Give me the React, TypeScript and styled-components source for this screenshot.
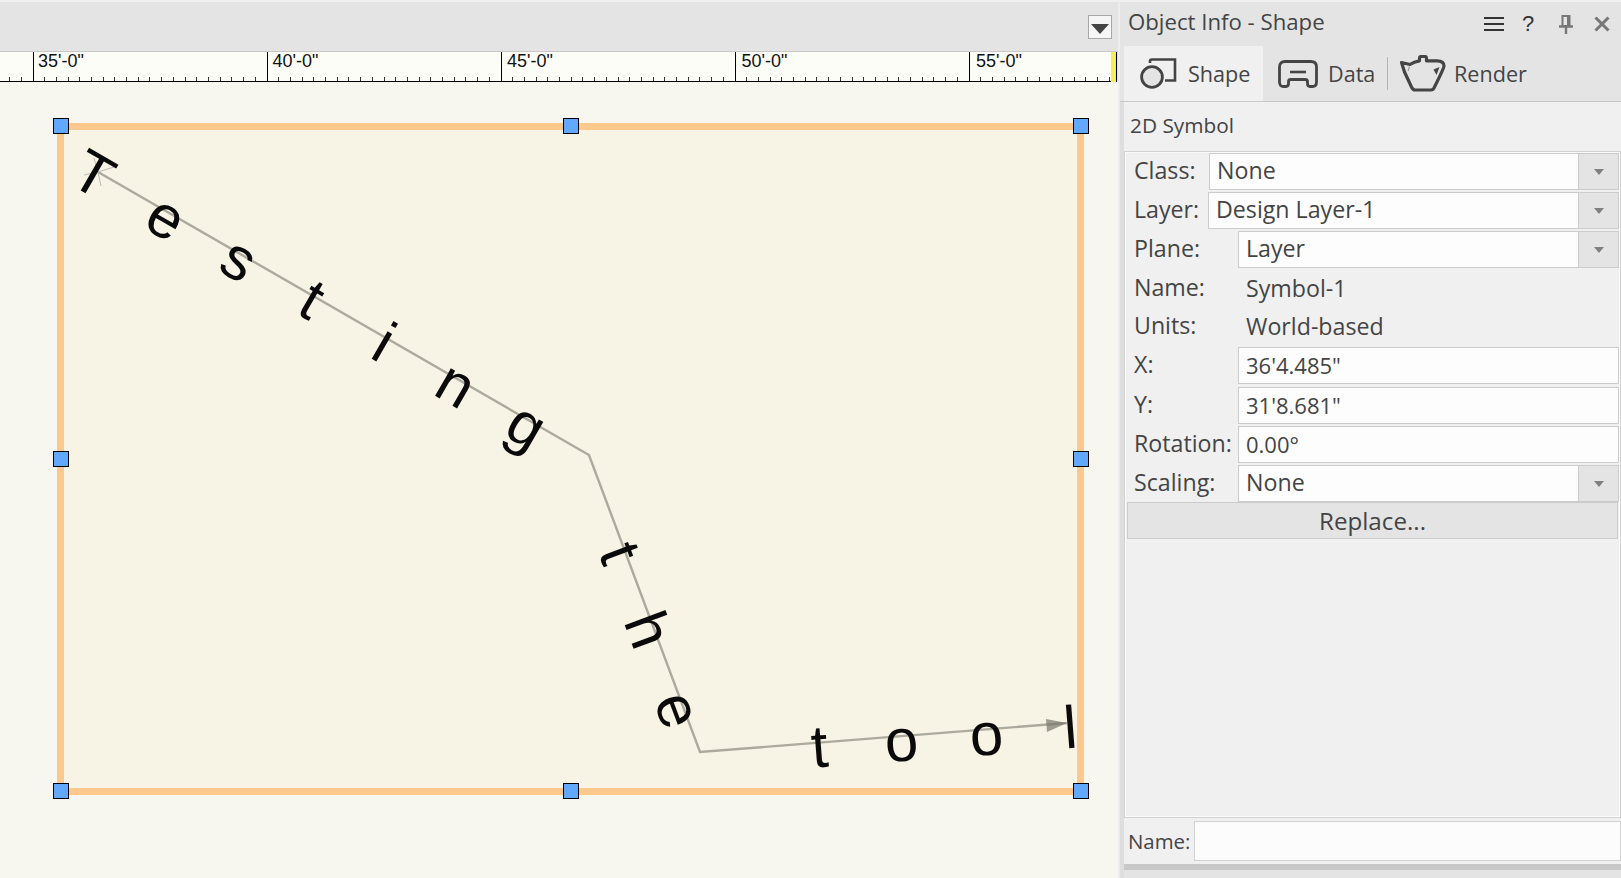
import React, { FC } from 'react'
import styled, { createGlobalStyle } from 'styled-components'

const GlobalStyle = createGlobalStyle`
	html, body {
		margin: 0;
		padding: 0;
		background: #f0f0f0;
		overflow: hidden;
	}
	* {
		box-sizing: border-box;
	}
`

const UI_FONT = `'Open Sans', 'Noto Sans', sans-serif`

// ruler: 234px between majors, 20 minor ticks per major
const MAJOR_STEP = 234
const MINOR_STEP = MAJOR_STEP / 20
const RULER_START = 32.5
const rulerLabels = [`35'-0"`, `40'-0"`, `45'-0"`, `50'-0"`, `55'-0"`]
const minorTicks = Array.from({ length: 95 }, (_, i) => RULER_START - 2 * MINOR_STEP + i * MINOR_STEP)

// letters sit along the path, x/y is the middle of the baseline in page coordinates
const letters = [
	{ ch: 'T', x: 83, y: 192, r: 30 },
	{ ch: 'e', x: 156, y: 235, r: 30 },
	{ ch: 's', x: 229, y: 277, r: 30 },
	{ ch: 't', x: 302, y: 317, r: 30 },
	{ ch: 'i', x: 374, y: 360, r: 30 },
	{ ch: 'n', x: 446, y: 402, r: 30 },
	{ ch: 'g', x: 516.5, y: 443, r: 30 },
	{ ch: 't', x: 601, y: 560, r: 69.5 },
	{ ch: 'h', x: 629, y: 637, r: 69.5 },
	{ ch: 'e', x: 659, y: 717, r: 69.5 },
	{ ch: 't', x: 821, y: 767, r: -4.5 },
	{ ch: 'o', x: 903, y: 761, r: -4.5 },
	{ ch: 'o', x: 988, y: 755, r: -4.5 },
	{ ch: 'l', x: 1072, y: 748, r: -4.5 },
]

const handles: [number, number][] = [
	[0, 0],
	[50, 0],
	[100, 0],
	[0, 50],
	[100, 50],
	[0, 100],
	[50, 100],
	[100, 100],
]

const HamburgerIcon = () => (
	<svg width='20' height='16' viewBox='0 0 20 16'>
		<path d='M0 2H20M0 8H20M0 14H20' stroke='#333' strokeWidth='2' />
	</svg>
)

const PinIcon = () => (
	<svg width='16' height='19' viewBox='0 0 16 19'>
		<path d='M4.5 1H11.5V11H4.5Z' fill='none' stroke='#777' strokeWidth='2' />
		<path d='M9 1.5H11.5V11H9Z' fill='#777' />
		<path d='M1 11.5H15M8 11.5V19' stroke='#777' strokeWidth='2.4' />
	</svg>
)

const CloseIcon = () => (
	<svg width='16' height='16' viewBox='0 0 16 16'>
		<path d='M1.5 1.5L14.5 14.5M14.5 1.5L1.5 14.5' stroke='#777' strokeWidth='3' />
	</svg>
)

const ShapeIcon = () => (
	<svg width='38' height='32' viewBox='0 0 38 32'>
		<path d='M11 5V3Q11 1.5 13 1.5H36V22.5H26' fill='none' stroke='#444' strokeWidth='2.6' />
		<circle cx='13' cy='19' r='10.4' fill='#e4e4e4' stroke='#444' strokeWidth='2.8' />
	</svg>
)

const DataIcon = () => (
	<svg width='40' height='28' viewBox='0 0 40 28'>
		<path
			d='M7 1.5H33Q38.5 1.5 38.5 7V22Q38.5 26.5 34.5 26.5H32Q29.5 26.5 29.5 23.5V21.5Q29.5 19.5 27 19.5H13Q10.5 19.5 10.5 21.5V23.5Q10.5 26.5 8 26.5H5.5Q1.5 26.5 1.5 22V7Q1.5 1.5 7 1.5Z'
			fill='none'
			stroke='#444'
			strokeWidth='2.8'
		/>
		<path d='M12 12H28' stroke='#444' strokeWidth='2.6' />
	</svg>
)

const TeapotIcon = () => (
	<svg width='46' height='37' viewBox='0 0 46 37'>
		<path
			d='M1.5 7.5L10 9.5Q14 6.5 19.5 5.8V3.2Q19.5 1.5 21 1.5H25Q26.5 1.5 26.5 3.2V5.8H37Q44 6 44 11Q44 13 34.5 32Q33.5 35 31 35H15Q13 35 11.5 32L4.5 17Z'
			fill='none'
			stroke='#444'
			strokeWidth='3.2'
			strokeLinejoin='round'
		/>
		<path d='M33.5 14.5L39.5 12L36.5 20Z' fill='#444' />
		<path d='M9.5 11.5L8 16' stroke='#999' strokeWidth='1.2' />
	</svg>
)

const Arrow = () => (
	<svg width='10' height='6' viewBox='0 0 10 6'>
		<path d='M0 0H10L5 6Z' fill='#808080' />
	</svg>
)

type SelectProps = { value: string }

const Select: FC<SelectProps> = ({ value }) => (
	<SelectBox>
		<SelectValue>{value}</SelectValue>
		<SelectButton>
			<Arrow />
		</SelectButton>
	</SelectBox>
)

export default function App() {
	return (
		<Root>
			<GlobalStyle />
			<Drawing>
				<Toolbar>
					<MenuButton>
						<svg width='18' height='10' viewBox='0 0 18 10'>
							<path d='M0 0H18L9 10Z' fill='#444' />
						</svg>
					</MenuButton>
				</Toolbar>
				<Ruler>
					<svg width='1118' height='30' viewBox='0 0 1118 30'>
						<rect x='1111' width='7' height='30' fill='#f4f05a' />
						<path d='M1116.5 0V30' stroke='#000' />
						<path d='M0 29.5H1111' stroke='#000' />
						{minorTicks.map((x, i) => (
							<path key={i} d={`M${Math.round(x) + 0.5} 25V29`} stroke='#333' />
						))}
						{rulerLabels.map((label, i) => (
							<g key={label}>
								<path d={`M${Math.round(RULER_START + i * MAJOR_STEP) + 0.5} 0V29`} stroke='#000' />
								<text
									x={RULER_START + 5.5 + i * 234.5}
									y='15'
									fontFamily='"Liberation Sans", Arial, sans-serif'
									fontSize='18'
									fill='#111'
								>
									{label}
								</text>
							</g>
						))}
					</svg>
				</Ruler>
				<Canvas>
					<Frame>
						{handles.map(([x, y]) => (
							<Handle key={`${x}-${y}`} $x={x} $y={y} />
						))}
					</Frame>
					<PathLayer width='1118' height='796' viewBox='0 82 1118 796'>
						<polyline points='98,172 589,455 700,752 1067,723' fill='none' stroke='#aca99d' strokeWidth='2.4' />
						<path d='M98 172L84 175M98 172L114 167M98 172L94 158M98 172L101 186' stroke='#bdbab0' strokeWidth='1' />
						<path d='M1046 719L1067 723L1047 732Z' fill='#77756c' fillOpacity='0.7' />
						{letters.map((l, i) => (
							<text
								key={i}
								x={l.x}
								y={l.y}
								fontFamily='"Liberation Sans", Arial, sans-serif'
								fontSize='60'
								textAnchor='middle'
								fill='#0a0a0a'
								transform={`rotate(${l.r} ${l.x} ${l.y})`}
							>
								{l.ch}
							</text>
						))}
					</PathLayer>
				</Canvas>
			</Drawing>
			<Sash />
			<Panel>
				<TitleBar>
					<Title>Object Info - Shape</Title>
					<TitleIcons>
						<TitleIcon>
							<HamburgerIcon />
						</TitleIcon>
						<HelpIcon>?</HelpIcon>
						<TitleIcon>
							<PinIcon />
						</TitleIcon>
						<TitleIcon>
							<CloseIcon />
						</TitleIcon>
					</TitleIcons>
				</TitleBar>
				<TabBar>
					<Tab $active $width={139} $pad={15}>
						<ShapeIcon />
						<TabLabel $gap={11}>Shape</TabLabel>
					</Tab>
					<Tab $width={124} $pad={15}>
						<DataIcon />
						<TabLabel $gap={10}>Data</TabLabel>
					</Tab>
					<TabSeparator />
					<Tab $width={145} $pad={12}>
						<TeapotIcon />
						<TabLabel $gap={8}>Render</TabLabel>
					</Tab>
				</TabBar>
				<PanelBody>
					<Heading>2D Symbol</Heading>
					<FieldBox>
						<Form>
							<Row>
								<Label $width={74}>Class:</Label>
								<Select value='None' />
							</Row>
							<Row>
								<Label $width={73}>Layer:</Label>
								<Select value='Design Layer-1' />
							</Row>
							<Row>
								<Label $width={103}>Plane:</Label>
								<Select value='Layer' />
							</Row>
							<Row>
								<Label $width={103}>Name:</Label>
								<PlainValue>Symbol-1</PlainValue>
							</Row>
							<Row>
								<Label $width={103}>Units:</Label>
								<PlainValue>World-based</PlainValue>
							</Row>
							<Row>
								<Label $width={103}>X:</Label>
								<TextBox>36'4.485"</TextBox>
							</Row>
							<Row>
								<Label $width={103}>Y:</Label>
								<TextBox>31'8.681"</TextBox>
							</Row>
							<Row>
								<Label $width={103}>Rotation:</Label>
								<TextBox>0.00°</TextBox>
							</Row>
							<Row>
								<Label $width={103}>Scaling:</Label>
								<Select value='None' />
							</Row>
							<ReplaceButton>Replace...</ReplaceButton>
						</Form>
					</FieldBox>
					<Footer>
						<FooterLabel>Name:</FooterLabel>
						<FooterInput />
					</Footer>
					<FooterBar />
				</PanelBody>
			</Panel>
		</Root>
	)
}

const Root = styled.div`
	display: flex;
	width: 1621px;
	height: 878px;
	padding-top: 2px;
	overflow: hidden;
	background: #f0f0f0;
	font-family: ${UI_FONT};
	font-size: 23.2px;
	color: #444;
`

const Drawing = styled.div`
	display: flex;
	flex-direction: column;
	width: 1118px;
	flex: none;
`

const Toolbar = styled.div`
	display: flex;
	justify-content: flex-end;
	height: 50px;
	padding: 13px 6px 0 0;
	background: #e4e4e4;
	border-bottom: 1px solid #c8c8c8;
`

const MenuButton = styled.div`
	display: flex;
	align-items: center;
	justify-content: center;
	width: 24px;
	height: 24px;
	padding-top: 3px;
	background: #f6f6f6;
	border: 1px solid #a8a8a8;
`

const Ruler = styled.div`
	height: 30px;
	background: #fdfdf8;
	line-height: 0;
`

const Canvas = styled.div`
	position: relative;
	flex: 1;
	background: #f8f7ef;
	overflow: hidden;
`

const Frame = styled.div`
	position: absolute;
	left: 57px;
	top: 41px;
	width: 1027px;
	height: 672px;
	background: #f7f4e6;
	border: 7px solid #fcc88c;
`

// handles centre on the middle of the 7px border, percentages count from the padding box
const Handle = styled.div<{ $x: number; $y: number }>`
	position: absolute;
	left: ${({ $x }) => `calc((100% + 7px) * ${$x / 100} - 11.5px)`};
	top: ${({ $y }) => `calc((100% + 7px) * ${$y / 100} - 12px)`};
	width: 16px;
	height: 16px;
	background: #62a8ff;
	border: 1.5px solid #000;
	z-index: 1;
`

const PathLayer = styled.svg`
	position: absolute;
	left: 0;
	top: 0;
`

const Sash = styled.div`
	width: 2px;
	flex: none;
	background: #ededed;
`

const Panel = styled.div`
	display: flex;
	flex-direction: column;
	flex: 1;
	min-width: 0;
	background: #dedede;
`

const TitleBar = styled.div`
	display: flex;
	align-items: center;
	justify-content: space-between;
	height: 44px;
	padding: 0 1px 5px 8px;
	background: #e4e4e4;
`

const Title = styled.div`
	font-size: 22.2px;
	color: #444;
`

const TitleIcons = styled.div`
	display: flex;
	align-items: center;
	margin-top: 5px;
`

const TitleIcon = styled.div`
	display: flex;
	align-items: center;
	justify-content: center;
	width: 36px;
	height: 36px;
`

const HelpIcon = styled(TitleIcon)`
	padding-right: 4px;
	font-family: 'Liberation Sans', Arial, sans-serif;
	font-size: 22px;
	color: #333;
`

const TabBar = styled.div`
	display: flex;
	align-items: stretch;
	height: 56px;
	padding-left: 4px;
	background: #e4e4e4;
	border-bottom: 1px solid #c8c8c8;
`

const Tab = styled.div<{ $active?: boolean; $width: number; $pad: number }>`
	display: flex;
	align-items: center;
	width: ${({ $width }) => $width}px;
	padding-left: ${({ $pad }) => $pad}px;
	background: ${({ $active }) => ($active ? '#f0f0f0' : 'transparent')};

	svg {
		flex: none;
	}
`

const TabLabel = styled.span<{ $gap: number }>`
	margin-left: ${({ $gap }) => $gap}px;
	font-size: 21.6px;
`

const TabSeparator = styled.div`
	width: 1px;
	margin: 11px 0 11px 0;
	background: #b4b4b4;
`

const PanelBody = styled.div`
	display: flex;
	flex-direction: column;
	flex: 1;
	margin-left: 4px;
	background: #f0f0f0;
`

const Heading = styled.div`
	display: flex;
	align-items: center;
	height: 45px;
	margin-bottom: 4px;
	padding-left: 6px;
	font-size: 20.8px;
`

const FieldBox = styled.div`
	height: 667px;
	padding: 1px 0 0;
	background: #f0f0f0;
	border: 1px solid #d2d2d2;
	box-shadow: inset 0 0 0 1px #fafafa;
`

const Form = styled.div`
	display: grid;
	grid-template-rows: 39px 39px 39px 38px 39px 40px 39px 39px 37px 37px;
	padding-right: 1px;
`

const Row = styled.div`
	display: flex;
	align-items: flex-start;
	padding-left: 9px;
`

const Label = styled.div<{ $width: number }>`
	flex: none;
	width: ${({ $width }) => $width + 1}px;
	height: 36px;
	line-height: 35px;
	white-space: nowrap;
`

const SelectBox = styled.div`
	display: flex;
	flex: 1;
	height: 37px;
`

const SelectValue = styled.div`
	flex: 1;
	padding-left: 7px;
	line-height: 32px;
	background: #fdfdfd;
	border: 1px solid #cccccc;
`

const SelectButton = styled.div`
	display: flex;
	align-items: center;
	justify-content: center;
	flex: none;
	width: 40px;
	background: #e4e4e4;
	border: 1px solid #cccccc;
	border-left: none;
`

const PlainValue = styled.div`
	padding-left: 8px;
	line-height: 37px;
`

const TextBox = styled.div`
	flex: 1;
	height: 37px;
	padding-left: 7px;
	font-size: 22px;
	line-height: 34px;
	background: #fdfdfd;
	border: 1px solid #cccccc;
`

const ReplaceButton = styled.div`
	height: 37px;
	margin: 0 1px 0 2px;
	font-size: 24.2px;
	line-height: 36px;
	text-align: center;
	background: #e4e4e4;
	border: 1px solid #cccccc;
`

const Footer = styled.div`
	display: flex;
	align-items: center;
	height: 46px;
	padding-left: 4px;
`

const FooterLabel = styled.div`
	width: 66px;
	font-size: 20.4px;
`

const FooterInput = styled.div`
	flex: 1;
	height: 40px;
	background: #fcfcfc;
	border: 1px solid #d2d2d2;
`

const FooterBar = styled.div`
	flex: 1;
	background: #e4e4e4;
	border-top: 6px solid #c8c8c8;
`
